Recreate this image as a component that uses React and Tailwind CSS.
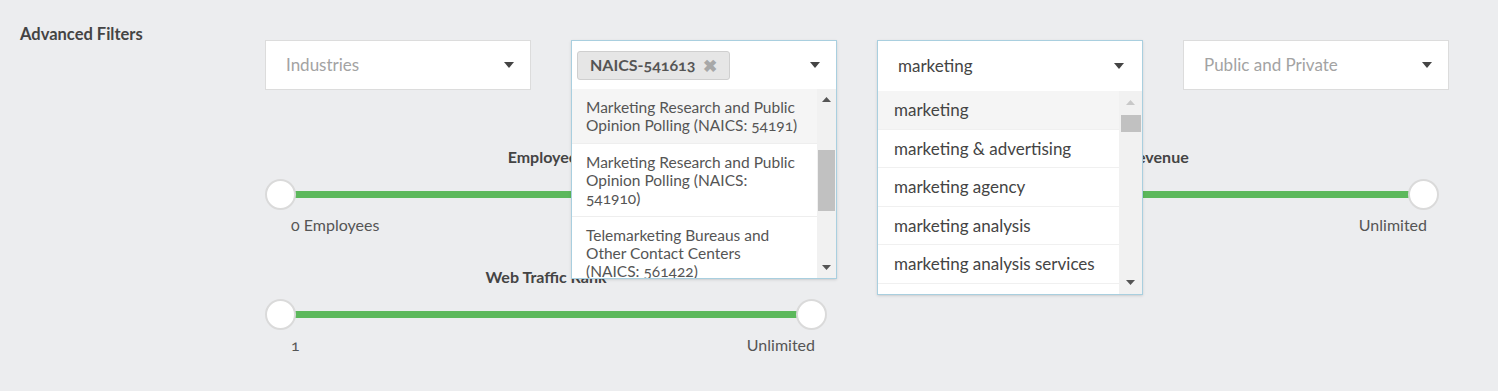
import React from 'react';

const font = { fontFamily: 'Lato, "Open Sans", sans-serif' };

const Caret = ({ className = '' }) => (
  <svg width="10" height="6" viewBox="0 0 10 6" className={className}>
    <path d="M0 0 L10 0 L5 6 Z" fill="#444" />
  </svg>
);

const ScrollArrow = ({ up, color = '#555' }) => (
  <svg width="9" height="5" viewBox="0 0 9 5">
    <path d={up ? 'M0 5 L9 5 L4.5 0 Z' : 'M0 0 L9 0 L4.5 5 Z'} fill={color} />
  </svg>
);

const PlainSelect = ({ placeholder }) => (
  <div className="h-[50px] bg-white border border-[#dcdcdc] flex items-center justify-between pl-5 pr-[16px]">
    <span className="text-[17px] text-[#a3a3a3]">{placeholder}</span>
    <Caret />
  </div>
);

const naicsOptions = [
  { lines: ['Marketing Research and Public', 'Opinion Polling (NAICS: 54191)'], active: true },
  { lines: ['Marketing Research and Public', 'Opinion Polling (NAICS:', '541910)'] },
  { lines: ['Telemarketing Bureaus and', 'Other Contact Centers', '(NAICS: 561422)'] },
];

const NaicsSelect = () => (
  <div className="relative h-[50px]">
    <div className="absolute left-0 right-0 top-0 z-10 bg-white border border-[#a9cfdf] shadow-sm">
      <div className="h-[48px] flex items-center justify-between pl-[5px] pr-[16px]">
        <span className="flex items-center gap-2 h-[29px] px-3 bg-[#e6e6e6] border border-[#cfcfcf] rounded-[3px] text-[16px] font-bold text-[#555] oldstyle-nums">
          NAICS-541613
          <span className="text-[#a8a8a8] text-[17px] leading-none">✖</span>
        </span>
        <Caret />
      </div>
      <div className="flex h-[189px] overflow-hidden">
        <div className="flex-1 overflow-hidden">
          {naicsOptions.map((o, i) => (
            <div
              key={i}
              className={`pl-[14px] pr-[4px] py-[9px] border-b border-[#eeeeee] text-[15.5px] leading-[18px] text-[#555] whitespace-nowrap oldstyle-nums ${o.active ? 'bg-[#f5f5f5]' : 'bg-white'}`}
            >
              {o.lines.map((l) => (
                <div key={l}>{l}</div>
              ))}
            </div>
          ))}
        </div>
        <div className="w-[19px] bg-[#f1f1f1] flex flex-col items-center pt-2 pb-[8px]">
          <ScrollArrow up />
          <div className="w-[17px] h-[61px] bg-[#c1c1c1] mt-[48px]" />
          <div className="flex-1" />
          <ScrollArrow />
        </div>
      </div>
    </div>
  </div>
);

const keywordOptions = [
  'marketing',
  'marketing & advertising',
  'marketing agency',
  'marketing analysis',
  'marketing analysis services',
];

const KeywordSelect = () => (
  <div className="relative h-[50px]">
    <div className="absolute left-0 right-0 top-0 z-10 bg-white border border-[#a9cfdf] shadow-sm">
      <div className="h-[50px] flex items-center justify-between pl-5 pr-[18px]">
        <span className="text-[17px] text-[#444]">marketing</span>
        <Caret />
      </div>
      <div className="flex h-[203px] overflow-hidden">
        <div className="flex-1 overflow-hidden">
          {keywordOptions.map((o, i) => (
            <div
              key={o}
              className={`h-[38.6px] flex items-center px-4 border-b border-[#f0f0f0] text-[17px] text-[#444] ${i === 0 ? 'bg-[#f5f5f5]' : 'bg-white'}`}
            >
              {o}
            </div>
          ))}
        </div>
        <div className="w-[23px] bg-[#f1f1f1] flex flex-col items-center pt-[9px] pb-[9px]">
          <ScrollArrow up color="#c8c8c8" />
          <div className="w-[20px] h-[17px] bg-[#c1c1c1] mt-[10px]" />
          <div className="flex-1" />
          <ScrollArrow />
        </div>
      </div>
    </div>
  </div>
);

const Thumb = ({ className = '' }) => (
  <div className={`absolute top-0 w-[31px] h-[31px] rounded-full bg-white border-2 border-[#dadada] ${className}`} />
);

const RangeSlider = ({ label, left, right }) => (
  <div className="pr-[10px]">
    <div className="text-center text-[16px] font-bold text-[#444] leading-5">{label}</div>
    <div className="relative h-[31px] mt-3">
      <div className="absolute left-[15px] right-[15px] top-[12px] h-[7px] bg-[#5cb85c]" />
      <Thumb className="left-0" />
      <Thumb className="right-0" />
    </div>
    <div className="flex justify-between pl-[26px] pr-3 mt-[5px] text-[16px] leading-5 text-[#555] oldstyle-nums">
      <span>{left}</span>
      <span>{right}</span>
    </div>
  </div>
);

export default function App() {
  return (
    <div className="w-[1498px] h-[391px] bg-[#ecedef] flex pt-[22px] overflow-hidden" style={font}>
      <div className="w-[265px] pl-5 shrink-0">
        <h2 className="text-[16.5px] font-bold text-[#444]">Advanced Filters</h2>
      </div>
      <div className="w-[1184px] pt-[18px]">
        <div className="grid grid-cols-4 gap-x-[40px]">
          <PlainSelect placeholder="Industries" />
          <NaicsSelect />
          <KeywordSelect />
          <PlainSelect placeholder="Public and Private" />
        </div>
        <div className="grid grid-cols-2 gap-x-[40px] gap-y-[32px] mt-[57px]">
          <RangeSlider label="Employees" left="0 Employees" right="Unlimited" />
          <RangeSlider label="Revenue" left="$0" right="Unlimited" />
          <RangeSlider label="Web Traffic Rank" left="1" right="Unlimited" />
        </div>
      </div>
    </div>
  );
}
